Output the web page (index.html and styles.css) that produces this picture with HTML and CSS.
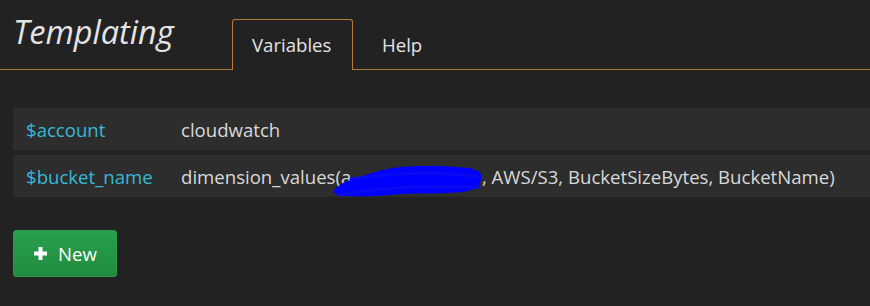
FILE: index.html
```html
<!DOCTYPE html>
<html>
<head>
<meta charset="utf-8">
<link rel="stylesheet" href="styles.css">
</head>
<body>
<div class="header">
  <h1 class="title">Templating</h1>
  <div class="tabs">
    <div class="tab active">Variables</div>
    <div class="tab">Help</div>
  </div>
</div>
<div class="content">
  <div class="rows">
    <div class="row">
      <div class="name">$account</div>
      <div class="value">cloudwatch</div>
    </div>
    <div class="row">
      <div class="name">$bucket_name</div>
      <div class="value">dimension_values(<span class="redact">a<svg class="scribble" width="154" height="34" viewBox="0 0 154 34"><path d="M3 25 C8 20 14 16 26 13 C40 8 52 4 70 2 C95 0 120 1 138 3 C148 5 152 9 150 15 C148 21 144 25 132 27 C110 29 90 28 70 29 C50 31 30 32 14 31 C6 30 1 28 3 25 Z" fill="#0000ff"/><path d="M8 30 C40 24 90 20 148 22 M20 14 C60 8 110 6 146 12" fill="none" stroke="#0a0af0" stroke-width="3" stroke-linecap="round"/></svg></span>, AWS/S3, BucketSizeBytes, BucketName)</div>
    </div>
  </div>
  <button class="btn-new"><svg class="plus" width="15" height="15" viewBox="0 0 15 15"><path d="M7.5 1v13M1 7.5h13" stroke="#fff" stroke-width="4"/></svg><span>New</span></button>
</div>
</body>
</html>
```
FILE: styles.css
```css
html, body {
  margin: 0;
  padding: 0;
  background: #222222;
  font-family: "Open Sans", "Liberation Sans", sans-serif;
  color: #d8d9da;
}
.header {
  display: flex;
  align-items: flex-end;
  height: 69px;
  border-bottom: 1px solid #a67c3a;
}
.title {
  margin: 0;
  align-self: flex-start;
  padding: 11px 0 0 13px;
  width: 219px;
  font-size: 32.5px;
  font-style: italic;
  font-weight: 400;
  color: #e3e4e5;
  line-height: 42px;
}
.tabs {
  display: flex;
  margin-bottom: -1px;
}
.tab {
  height: 49px;
  box-sizing: border-box;
  padding: 12px 20px 0;
  font-size: 18.6px;
  color: #e3e4e5;
  line-height: 26px;
  border: 1px solid transparent;
  border-bottom: none;
}
.tab.active {
  width: 121px;
  padding-left: 19px;
  border-color: #b87a38;
  border-radius: 3px 3px 0 0;
  background: #222222;
  height: 51px;
}
.tab + .tab {
  padding-left: 28px;
}
.content {
  padding: 38px 0 0 13px;
}
.rows {
  display: flex;
  flex-direction: column;
  gap: 5px;
}
.row {
  display: flex;
  align-items: center;
  height: 42px;
  background: #2d2d2d;
  font-size: 18.6px;
}
.name {
  width: 155px;
  padding-left: 13px;
  color: #35bad6;
}
.value {
  color: #d8d9da;
  white-space: nowrap;
}
.redact {
  position: relative;
  display: inline-block;
  width: 141px;
}
.scribble {
  position: absolute;
  left: -10px;
  top: 1px;
}
.btn-new {
  margin-top: 33px;
  display: flex;
  align-items: center;
  width: 104px;
  height: 47px;
  padding: 0 0 0 19px;
  border: 1px solid #2a9c48;
  border-radius: 3px;
  background: linear-gradient(#27a04c, #218c3f);
  color: #ffffff;
  font-family: "Open Sans", "Liberation Sans", sans-serif;
  font-size: 18.6px;
  box-sizing: border-box;
  cursor: pointer;
}
.plus {
  margin-right: 10px;
}
```
